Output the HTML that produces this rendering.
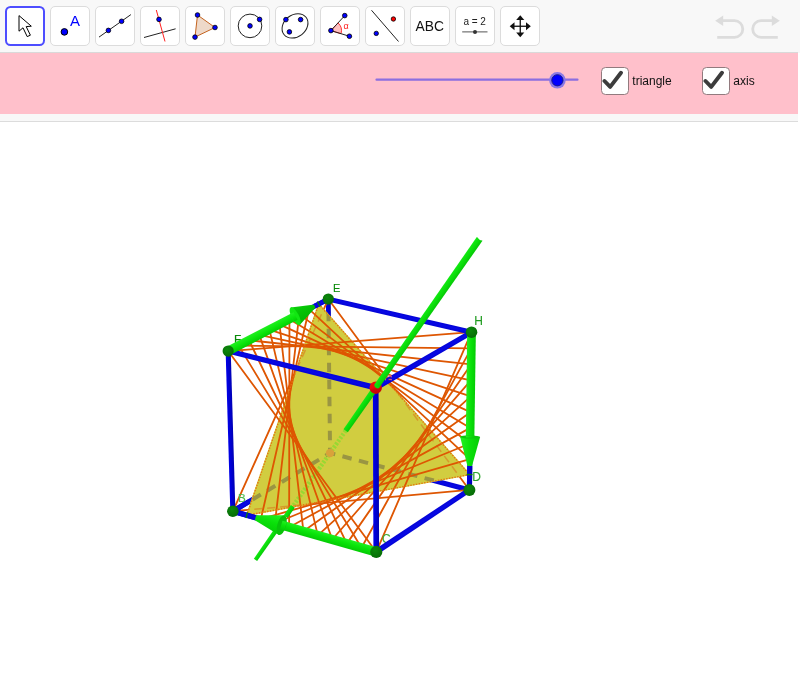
<!DOCTYPE html>
<html><head><meta charset="utf-8"><title>GeoGebra</title>
<style>
html,body{margin:0;padding:0;background:#fff;overflow:hidden}
body{width:800px;height:700px;position:relative;font-family:"Liberation Sans",sans-serif}
#tb{position:absolute;left:0;top:0;width:800px;height:53px;background:#f8f8f8}
#tbl{position:absolute;left:0;top:52px;width:798px;height:1px;background:#d9d9d9}
.btn{position:absolute;top:6px;width:40px;height:40px;box-sizing:border-box;border:1px solid #dcdcdc;border-radius:5px;background:#fff}
.btn svg{position:absolute;left:-1px;top:-1px}
.btn.sel{border:2px solid #4d4dff;border-radius:5.5px}
.btn.sel svg{left:-2px;top:-2px}
#pink{position:absolute;left:0;top:53px;width:798px;height:61px;background:#ffc0cb}
#split{position:absolute;left:0;top:114px;width:798px;height:7px;background:#f8f8f8;border-bottom:1px solid #dcdcdc}
.cb{position:absolute;top:67px;width:27.5px;height:27.5px;box-sizing:border-box;border:1.7px solid #927a7e;border-radius:4.5px;background:#fff}
.cl{position:absolute;top:74px;font-size:12px;line-height:14px;color:#111}
#root{position:absolute;left:0;top:0;width:800px;height:700px;will-change:transform}
</style></head><body>
<div id="root">
<div id="tb">
<div class="btn sel" style="left:5px"><svg width="40" height="40" viewBox="0 0 40 40"><polygon points="19,15.6 19,31.2 23,27.8 27.2,36.6 30.4,35.2 26.2,26.6 31.3,26.2" fill="#fff" stroke="#000" stroke-width="1" stroke-linejoin="miter" transform="translate(-5,-6)"/></svg></div>
<div class="btn" style="left:50px"><svg width="40" height="40" viewBox="0 0 40 40"><g transform="translate(-50,-6)"><circle cx="64.4" cy="31.9" r="3.3" fill="#0000ff" stroke="#000" stroke-width="1"/><text x="70.0" y="25.8" font-size="15" fill="#0000ff" font-family="Liberation Sans, sans-serif">A</text></g></svg></div>
<div class="btn" style="left:95px"><svg width="40" height="40" viewBox="0 0 40 40"><g transform="translate(-95,-6)"><line x1="99" y1="37.1" x2="130.9" y2="14.6" stroke="#222" stroke-width="1"/><circle cx="108.4" cy="30.4" r="2.3" fill="#0000ff" stroke="#000" stroke-width="0.8"/><circle cx="121.6" cy="21.3" r="2.3" fill="#0000ff" stroke="#000" stroke-width="0.8"/></g></svg></div>
<div class="btn" style="left:140px"><svg width="40" height="40" viewBox="0 0 40 40"><g transform="translate(-140,-6)"><line x1="144" y1="37.5" x2="175.6" y2="28.8" stroke="#222" stroke-width="1"/><line x1="156.3" y1="10" x2="165" y2="41.5" stroke="#ff2020" stroke-width="1"/><circle cx="159" cy="19.4" r="2.3" fill="#0000ff" stroke="#000" stroke-width="0.8"/></g></svg></div>
<div class="btn" style="left:185px"><svg width="40" height="40" viewBox="0 0 40 40"><g transform="translate(-185,-6)"><polygon points="197.5,15 215,27.5 195,37.1" fill="#eed9c9" stroke="#c4631f" stroke-width="1"/><circle cx="197.5" cy="15" r="2.3" fill="#0000ff" stroke="#000" stroke-width="0.8"/><circle cx="215" cy="27.5" r="2.3" fill="#0000ff" stroke="#000" stroke-width="0.8"/><circle cx="195" cy="37.1" r="2.3" fill="#0000ff" stroke="#000" stroke-width="0.8"/></g></svg></div>
<div class="btn" style="left:230px"><svg width="40" height="40" viewBox="0 0 40 40"><g transform="translate(-230,-6)"><circle cx="250" cy="25.9" r="11.8" fill="none" stroke="#222" stroke-width="1"/><circle cx="250" cy="25.9" r="2.3" fill="#0000ff" stroke="#000" stroke-width="0.8"/><circle cx="259.6" cy="19.4" r="2.3" fill="#0000ff" stroke="#000" stroke-width="0.8"/></g></svg></div>
<div class="btn" style="left:275px"><svg width="40" height="40" viewBox="0 0 40 40"><g transform="translate(-275,-6)"><ellipse cx="295" cy="25.9" rx="14" ry="11" transform="rotate(-38 295 25.9)" fill="none" stroke="#222" stroke-width="1"/><circle cx="285.9" cy="19.6" r="2.3" fill="#0000ff" stroke="#000" stroke-width="0.8"/><circle cx="300.6" cy="19.6" r="2.3" fill="#0000ff" stroke="#000" stroke-width="0.8"/><circle cx="289.4" cy="31.9" r="2.3" fill="#0000ff" stroke="#000" stroke-width="0.8"/></g></svg></div>
<div class="btn" style="left:320px"><svg width="40" height="40" viewBox="0 0 40 40"><g transform="translate(-320,-6)"><path d="M330.9,30.6 L338.0,22.9 A10.5,10.5 0 0 1 341.0,33.7 Z" fill="#ffc0c0" stroke="#ff3030" stroke-width="1"/><line x1="330.9" y1="30.6" x2="344.75" y2="15.6" stroke="#222" stroke-width="1"/><line x1="330.9" y1="30.6" x2="349.4" y2="36.25" stroke="#222" stroke-width="1"/><circle cx="330.9" cy="30.6" r="2.3" fill="#0000ff" stroke="#000" stroke-width="0.8"/><circle cx="344.75" cy="15.6" r="2.3" fill="#0000ff" stroke="#000" stroke-width="0.8"/><circle cx="349.4" cy="36.25" r="2.3" fill="#0000ff" stroke="#000" stroke-width="0.8"/><text x="343.6" y="29" font-size="9" fill="#ff2020" font-family="Liberation Sans, sans-serif">α</text></g></svg></div>
<div class="btn" style="left:365px"><svg width="40" height="40" viewBox="0 0 40 40"><g transform="translate(-365,-6)"><line x1="371.5" y1="10.25" x2="398.5" y2="41.5" stroke="#222" stroke-width="1"/><circle cx="393.4" cy="19" r="2.2" fill="#ff0000" stroke="#000" stroke-width="0.8"/><circle cx="376.25" cy="33.4" r="2.2" fill="#0000ff" stroke="#000" stroke-width="0.8"/></g></svg></div>
<div class="btn" style="left:410px"><svg width="40" height="40" viewBox="0 0 40 40"><g transform="translate(-410,-6)"><text x="415.6" y="30.7" font-size="13.8" fill="#111" font-family="Liberation Sans, sans-serif">ABC</text></g></svg></div>
<div class="btn" style="left:455px"><svg width="40" height="40" viewBox="0 0 40 40"><g transform="translate(-455,-6)"><text x="463.4" y="24.7" font-size="10" fill="#222" font-family="Liberation Sans, sans-serif">a = 2</text><line x1="462.2" y1="31.9" x2="487.5" y2="31.9" stroke="#555" stroke-width="1"/><circle cx="475" cy="31.9" r="2" fill="#333"/></g></svg></div>
<div class="btn" style="left:500px"><svg width="40" height="40" viewBox="0 0 40 40"><g transform="translate(-500,-6)" fill="#111" stroke="none"><rect x="519.6" y="18" width="1.3" height="16.5"/><rect x="512" y="25.6" width="16.5" height="1.3"/><polygon points="520.25,15.2 524.3,20 516.2,20"/><polygon points="520.25,37.3 524.3,32.5 516.2,32.5"/><polygon points="509.7,26.25 514.5,22.2 514.5,30.3"/><polygon points="530.8,26.25 526,22.2 526,30.3"/></g></svg></div>
<svg style="position:absolute;left:700px;top:0" width="100" height="52" viewBox="700 0 100 52">
<g fill="none" stroke="#dcdcdc" stroke-width="2.8">
<path d="M722.5,20.7 H734.5 A8.2,8.2 0 0 1 734.5,37.3 H717.2"/>
<path d="M772.5,20.7 H761 A8.2,8.2 0 0 0 761,37.3 H777.8"/>
</g>
<polygon points="715.2,20.7 723.2,15.4 723.2,26" fill="#dcdcdc"/>
<polygon points="779.8,20.7 771.8,15.4 771.8,26" fill="#dcdcdc"/>
</svg>
</div>
<div id="tbl"></div>
<div id="pink"></div>
<div id="split"></div>
<svg style="position:absolute;left:360px;top:60px" width="240" height="40" viewBox="360 60 240 40">
<line x1="376.5" y1="79.7" x2="577.5" y2="79.7" stroke="#8c6ee0" stroke-width="2.2" stroke-linecap="round"/>
<circle cx="557.4" cy="80.3" r="8.3" fill="#8a7ae6"/>
<circle cx="557.4" cy="80.3" r="5.6" fill="#0000ff" stroke="#16168c" stroke-width="1"/>
</svg>
<div class="cb" style="left:601.2px"><svg width="24" height="24" viewBox="603.5 69 24 24" style="position:absolute;left:0;top:0"><polyline points="606.0,82.0 611.7,87.9 622.5,73.7" fill="none" stroke="#3c3c3c" stroke-width="3.9" stroke-linecap="round" stroke-linejoin="round"/></svg></div>
<div class="cl" style="left:632.3px">triangle</div>
<div class="cb" style="left:702.2px"><svg width="24" height="24" viewBox="704.5 69 24 24" style="position:absolute;left:0;top:0"><polyline points="707.0,82.0 712.7,87.9 723.5,73.7" fill="none" stroke="#3c3c3c" stroke-width="3.9" stroke-linecap="round" stroke-linejoin="round"/></svg></div>
<div class="cl" style="left:733.3px">axis</div>
<svg width="800" height="578" viewBox="0 122 800 578" style="position:absolute;left:0;top:122px">
<defs>
<style>
.o{stroke:#de5602;stroke-width:1.8;stroke-linecap:round}
.oh{stroke:#d69a2c;stroke-width:1.5;stroke-dasharray:8 5}
.od{stroke:#e67410;stroke-width:1.4;stroke-dasharray:1.5 1.3}
.h{stroke:#9a9542;stroke-width:4.0;stroke-dasharray:9.5 7.5;stroke-dashoffset:4.2}
.axh{stroke:#98d832;stroke-width:4.4;stroke-dasharray:2.2 1.5}
.lbl{font-family:"Liberation Sans",sans-serif}
</style><clipPath id="tc"><polygon points="318.73,304.02 469.61,474.56 246.79,515.23"/></clipPath>
<linearGradient id="g1" gradientUnits="userSpaceOnUse" x1="331.56" y1="376.01" x2="326.81" y2="376.06"><stop offset="0" stop-color="#0000b4"/><stop offset="0.45" stop-color="#0000d2"/><stop offset="1" stop-color="#0000ea"/></linearGradient>
<linearGradient id="g2" gradientUnits="userSpaceOnUse" x1="280.21" y1="480.05" x2="282.72" y2="484.25"><stop offset="0" stop-color="#0202d4"/><stop offset="0.45" stop-color="#0808e6"/><stop offset="1" stop-color="#0404d6"/></linearGradient>
<linearGradient id="g3" gradientUnits="userSpaceOnUse" x1="399.11" y1="473.85" x2="400.37" y2="469.12"><stop offset="0" stop-color="#0202d4"/><stop offset="0.45" stop-color="#0808e6"/><stop offset="1" stop-color="#0404d6"/></linearGradient>
<linearGradient id="g4" gradientUnits="userSpaceOnUse" x1="242.18" y1="508.64" x2="239.57" y2="504.30"><stop offset="0" stop-color="#0202d4"/><stop offset="0.45" stop-color="#0808e6"/><stop offset="1" stop-color="#0404d6"/></linearGradient>
<linearGradient id="g5" gradientUnits="userSpaceOnUse" x1="268.18" y1="545.37" x2="264.69" y2="542.93"><stop offset="0" stop-color="#06c806"/><stop offset="0.45" stop-color="#0adc0a"/><stop offset="1" stop-color="#12ea12"/></linearGradient>
<linearGradient id="g6" gradientUnits="userSpaceOnUse" x1="291.23" y1="512.80" x2="287.33" y2="510.08"><stop offset="0" stop-color="#06c806"/><stop offset="0.45" stop-color="#0adc0a"/><stop offset="1" stop-color="#12ea12"/></linearGradient>
<linearGradient id="g7" gradientUnits="userSpaceOnUse" x1="400.47" y1="313.21" x2="399.35" y2="318.03"><stop offset="0" stop-color="#0202d4"/><stop offset="0.45" stop-color="#0808e6"/><stop offset="1" stop-color="#0404d6"/></linearGradient>
<linearGradient id="g8" gradientUnits="userSpaceOnUse" x1="277.10" y1="322.86" x2="279.38" y2="327.25"><stop offset="0" stop-color="#0202d4"/><stop offset="0.45" stop-color="#0808e6"/><stop offset="1" stop-color="#0404d6"/></linearGradient>
<linearGradient id="g9" gradientUnits="userSpaceOnUse" x1="227.97" y1="431.24" x2="233.06" y2="431.09"><stop offset="0" stop-color="#0000ea"/><stop offset="0.45" stop-color="#0000d2"/><stop offset="1" stop-color="#0000b4"/></linearGradient>
<linearGradient id="g10" gradientUnits="userSpaceOnUse" x1="473.01" y1="411.11" x2="467.91" y2="411.04"><stop offset="0" stop-color="#0000b4"/><stop offset="0.45" stop-color="#0000d2"/><stop offset="1" stop-color="#0000ea"/></linearGradient>
<linearGradient id="g11" gradientUnits="userSpaceOnUse" x1="303.82" y1="534.22" x2="305.29" y2="529.02"><stop offset="0" stop-color="#0202d4"/><stop offset="0.45" stop-color="#0808e6"/><stop offset="1" stop-color="#0404d6"/></linearGradient>
<linearGradient id="g12" gradientUnits="userSpaceOnUse" x1="424.33" y1="523.20" x2="421.33" y2="518.71"><stop offset="0" stop-color="#0202d4"/><stop offset="0.45" stop-color="#0808e6"/><stop offset="1" stop-color="#0404d6"/></linearGradient>
<linearGradient id="g13" gradientUnits="userSpaceOnUse" x1="301.29" y1="371.99" x2="302.59" y2="366.75"><stop offset="0" stop-color="#0202d4"/><stop offset="0.45" stop-color="#0808e6"/><stop offset="1" stop-color="#0404d6"/></linearGradient>
<linearGradient id="g14" gradientUnits="userSpaceOnUse" x1="424.97" y1="362.28" x2="422.26" y2="357.60"><stop offset="0" stop-color="#0202d4"/><stop offset="0.45" stop-color="#0808e6"/><stop offset="1" stop-color="#0404d6"/></linearGradient>
<linearGradient id="g15" gradientUnits="userSpaceOnUse" x1="373.13" y1="469.84" x2="378.83" y2="469.82"><stop offset="0" stop-color="#0000ea"/><stop offset="0.45" stop-color="#0000d2"/><stop offset="1" stop-color="#0000b4"/></linearGradient>
<clipPath id="gc"><rect x="385.3" y="374.5" width="6.2" height="5.8"/></clipPath>
<linearGradient id="g16" gradientUnits="userSpaceOnUse" x1="264.14" y1="337.31" x2="260.10" y2="329.54"><stop offset="0" stop-color="#04cc04"/><stop offset="0.45" stop-color="#0ae40a"/><stop offset="1" stop-color="#20f020"/></linearGradient>
<linearGradient id="g17" gradientUnits="userSpaceOnUse" x1="299.70" y1="324.95" x2="290.66" y2="307.56"><stop offset="0" stop-color="#02b402"/><stop offset="0.5" stop-color="#04c004"/><stop offset="1" stop-color="#0ad00a"/></linearGradient>
<linearGradient id="g18" gradientUnits="userSpaceOnUse" x1="295.91" y1="320.72" x2="291.94" y2="313.09"><stop offset="0" stop-color="#04cc04"/><stop offset="0.45" stop-color="#0ae40a"/><stop offset="1" stop-color="#20f020"/></linearGradient>
<linearGradient id="g19" gradientUnits="userSpaceOnUse" x1="466.51" y1="385.03" x2="475.11" y2="385.15"><stop offset="0" stop-color="#20f020"/><stop offset="0.45" stop-color="#0ae40a"/><stop offset="1" stop-color="#04cc04"/></linearGradient>
<linearGradient id="g20" gradientUnits="userSpaceOnUse" x1="460.12" y1="436.85" x2="480.12" y2="437.12"><stop offset="0" stop-color="#22f222"/><stop offset="0.5" stop-color="#0ae00a"/><stop offset="1" stop-color="#04cc04"/></linearGradient>
<linearGradient id="g21" gradientUnits="userSpaceOnUse" x1="465.87" y1="436.46" x2="474.37" y2="436.57"><stop offset="0" stop-color="#20f020"/><stop offset="0.45" stop-color="#0ae40a"/><stop offset="1" stop-color="#04cc04"/></linearGradient>
<linearGradient id="g22" gradientUnits="userSpaceOnUse" x1="329.77" y1="534.02" x2="327.27" y2="542.82"><stop offset="0" stop-color="#20f020"/><stop offset="0.45" stop-color="#0ae40a"/><stop offset="1" stop-color="#04cc04"/></linearGradient>
<linearGradient id="g23" gradientUnits="userSpaceOnUse" x1="284.52" y1="515.33" x2="278.95" y2="534.96"><stop offset="0" stop-color="#22f222"/><stop offset="0.5" stop-color="#0ae00a"/><stop offset="1" stop-color="#04cc04"/></linearGradient>
<linearGradient id="g24" gradientUnits="userSpaceOnUse" x1="284.63" y1="521.29" x2="282.17" y2="529.95"><stop offset="0" stop-color="#20f020"/><stop offset="0.45" stop-color="#0ae40a"/><stop offset="1" stop-color="#04cc04"/></linearGradient>
<linearGradient id="g25" gradientUnits="userSpaceOnUse" x1="322.60" y1="304.72" x2="320.38" y2="300.44"><stop offset="0" stop-color="#0202d4"/><stop offset="0.45" stop-color="#0808e6"/><stop offset="1" stop-color="#0404d6"/></linearGradient>
<linearGradient id="g26" gradientUnits="userSpaceOnUse" x1="467.02" y1="477.90" x2="472.12" y2="477.96"><stop offset="0" stop-color="#0000ea"/><stop offset="0.45" stop-color="#0000d2"/><stop offset="1" stop-color="#0000b4"/></linearGradient>
<linearGradient id="g27" gradientUnits="userSpaceOnUse" x1="244.87" y1="512.01" x2="243.46" y2="516.96"><stop offset="0" stop-color="#0202d4"/><stop offset="0.45" stop-color="#0808e6"/><stop offset="1" stop-color="#0404d6"/></linearGradient>
<linearGradient id="rsph" x1="0" y1="0" x2="0.3" y2="1"><stop offset="0" stop-color="#ee1010"/><stop offset="0.55" stop-color="#e80c0c"/><stop offset="0.7" stop-color="#cc0808"/><stop offset="1" stop-color="#c80606"/></linearGradient>
<radialGradient id="sph" cx="0.4" cy="0.35" r="0.75"><stop offset="0" stop-color="#0c880c"/><stop offset="1" stop-color="#066806"/></radialGradient>
<linearGradient id="g28" gradientUnits="userSpaceOnUse" x1="362.98" y1="410.80" x2="358.39" y2="407.59"><stop offset="0" stop-color="#06c806"/><stop offset="0.45" stop-color="#0adc0a"/><stop offset="1" stop-color="#12ea12"/></linearGradient>
<linearGradient id="g29" gradientUnits="userSpaceOnUse" x1="430.92" y1="314.22" x2="425.67" y2="310.55"><stop offset="0" stop-color="#06c806"/><stop offset="0.45" stop-color="#0adc0a"/><stop offset="1" stop-color="#12ea12"/></linearGradient>
</defs>
<polygon points="332.43,453.00 330.70,299.02 325.90,299.07 327.73,453.05" fill="url(#g1)"/>
<polygon points="328.87,451.01 231.54,509.09 234.16,513.46 331.28,455.04" fill="url(#g2)"/>
<polygon points="329.47,455.29 468.75,492.41 470.06,487.48 330.68,450.75" fill="url(#g3)"/>
<line x1="328.30" y1="299.05" x2="469.40" y2="489.95" class="o" />
<line x1="469.40" y1="489.95" x2="232.85" y2="511.27" class="o" />
<line x1="232.85" y1="511.27" x2="328.30" y2="299.05" class="o" />
<polygon points="318.73,304.02 469.61,474.56 246.79,515.23" fill="#d1cd40" stroke="#d1cd40" stroke-width="1.5" stroke-linejoin="round"/>
<g clip-path="url(#tc)">
<line x1="330.08" y1="453.02" x2="328.30" y2="299.05" class="h" />
<line x1="330.08" y1="453.02" x2="232.85" y2="511.27" class="h" />
<line x1="330.08" y1="453.02" x2="469.40" y2="489.95" class="h" />
<line x1="345.66" y1="430.71" x2="255.47" y2="559.85" class="axh" />
<line x1="328.30" y1="299.05" x2="469.40" y2="489.95" class="oh" />
<line x1="469.40" y1="489.95" x2="232.85" y2="511.27" class="oh" />
<line x1="232.85" y1="511.27" x2="328.30" y2="299.05" class="oh" />
<circle cx="330.08" cy="453.02" r="4.2" fill="#d9a23a"/>
</g>
<line x1="228.18" y1="351.06" x2="471.52" y2="332.19" class="o" />
<line x1="471.52" y1="332.19" x2="376.26" y2="551.97" class="o" />
<line x1="376.26" y1="551.97" x2="228.18" y2="351.06" class="o" />
<line x1="238.65" y1="345.62" x2="471.31" y2="348.37" class="o" />
<line x1="471.31" y1="348.37" x2="361.50" y2="547.78" class="o" />
<line x1="361.50" y1="547.78" x2="238.65" y2="345.62" class="o" />
<line x1="249.02" y1="340.24" x2="471.09" y2="364.46" class="o" />
<line x1="471.09" y1="364.46" x2="346.85" y2="543.62" class="o" />
<line x1="346.85" y1="543.62" x2="249.02" y2="340.24" class="o" />
<line x1="259.28" y1="334.90" x2="470.88" y2="380.45" class="o" />
<line x1="470.88" y1="380.45" x2="332.28" y2="539.49" class="o" />
<line x1="332.28" y1="539.49" x2="259.28" y2="334.90" class="o" />
<line x1="269.44" y1="329.63" x2="470.66" y2="396.36" class="o" />
<line x1="470.66" y1="396.36" x2="317.81" y2="535.38" class="o" />
<line x1="317.81" y1="535.38" x2="269.44" y2="329.63" class="o" />
<line x1="279.49" y1="324.40" x2="470.45" y2="412.17" class="o" />
<line x1="470.45" y1="412.17" x2="303.43" y2="531.30" class="o" />
<line x1="303.43" y1="531.30" x2="279.49" y2="324.40" class="o" />
<line x1="289.45" y1="319.23" x2="470.24" y2="427.90" class="o" />
<line x1="470.24" y1="427.90" x2="289.13" y2="527.24" class="o" />
<line x1="289.13" y1="527.24" x2="289.45" y2="319.23" class="o" />
<line x1="299.31" y1="314.11" x2="470.03" y2="443.54" class="o" />
<line x1="470.03" y1="443.54" x2="274.93" y2="523.21" class="o" />
<line x1="274.93" y1="523.21" x2="299.31" y2="314.11" class="o" />
<line x1="309.07" y1="309.04" x2="469.82" y2="459.10" class="o" />
<line x1="469.82" y1="459.10" x2="260.82" y2="519.21" class="o" />
<line x1="260.82" y1="519.21" x2="309.07" y2="309.04" class="o" />
<line x1="318.73" y1="304.02" x2="469.61" y2="474.56" class="od" />
<line x1="469.61" y1="474.56" x2="246.79" y2="515.23" class="od" />
<line x1="246.79" y1="515.23" x2="318.73" y2="304.02" class="od" />
<text x="332.9" y="291.9" class="lbl" font-size="11.0" fill="#0a8a0a" stroke="#0a8a0a" stroke-width="0.12">E</text>
<text x="474.3" y="324.9" class="lbl" font-size="12.0" fill="#229c22" stroke="#229c22" stroke-width="0.12">H</text>
<text x="472.3" y="480.9" class="lbl" font-size="12.0" fill="#2da22d" stroke="#2da22d" stroke-width="0.12">D</text>
<text x="382.0" y="542.8" class="lbl" font-size="12.0" fill="#3aac3a" stroke="#3aac3a" stroke-width="0.12">C</text>
<text x="238.0" y="501.6" class="lbl" font-size="11.6" fill="#4cba4c" stroke="#4cba4c" stroke-width="0.12">B</text>
<text x="234.0" y="343.7" class="lbl" font-size="12.0" fill="#0a8a0a" stroke="#0a8a0a" stroke-width="0.12">F</text>
<polygon points="234.16,513.46 250.19,503.81 247.61,499.51 231.54,509.09" fill="url(#g4)"/>
<polygon points="257.11,560.99 279.24,529.74 275.55,527.16 253.83,558.70" fill="url(#g5)"/>
<polygon points="287.63,517.91 294.83,507.69 290.89,504.94 283.77,515.22" fill="url(#g6)"/>
<polygon points="472.10,329.71 328.84,296.71 327.76,301.38 470.95,334.68" fill="url(#g7)"/>
<polygon points="327.19,296.92 227.00,348.80 229.35,353.32 329.41,301.18" fill="url(#g8)"/>
<polygon points="225.63,351.14 230.31,511.35 235.40,511.20 230.73,350.99" fill="url(#g9)"/>
<polygon points="471.95,489.98 474.07,332.23 468.97,332.16 466.86,489.91" fill="url(#g10)"/>
<polygon points="232.16,513.73 375.48,554.71 377.03,549.23 233.55,508.82" fill="url(#g11)"/>
<polygon points="377.84,554.34 470.82,492.07 467.99,487.82 374.68,549.59" fill="url(#g12)"/>
<polygon points="227.56,353.54 375.02,390.45 376.39,384.92 228.79,348.59" fill="url(#g13)"/>
<polygon points="377.14,390.15 472.80,334.40 470.25,329.99 374.28,385.22" fill="url(#g14)"/>
<polygon points="372.86,387.70 373.41,551.98 379.11,551.96 378.56,387.68" fill="url(#g15)"/>
<text x="384.0" y="384.3" font-size="12" font-family="Liberation Sans, sans-serif" fill="#ffe0e0" stroke="#e83030" stroke-width="0.7" clip-path="url(#gc)">G</text>
<polygon points="230.23,355.01 298.05,319.61 294.08,311.98 226.13,347.11" fill="url(#g16)"/>
<polygon points="299.70,324.95 318.73,304.02 290.66,307.56" fill="url(#g17)"/>
<ellipse cx="295.18" cy="316.25" rx="3.70" ry="9.80" transform="rotate(-27.45 295.18 316.25)" fill="#12e612"/>
<polygon points="294.21,321.60 297.61,319.84 293.64,312.21 290.24,313.97" fill="url(#g18)"/>
<polygon points="467.17,332.14 465.85,437.93 474.35,438.04 475.87,332.25" fill="url(#g19)"/>
<polygon points="460.12,436.85 469.61,474.56 480.12,437.12" fill="url(#g20)"/>
<ellipse cx="470.12" cy="436.98" rx="1.60" ry="10.00" transform="rotate(90.77 470.12 436.98)" fill="#0cc60c"/>
<polygon points="465.89,435.49 465.86,437.43 474.36,437.54 474.39,435.60" fill="url(#g21)"/>
<polygon points="377.53,547.49 282.00,520.54 279.55,529.20 374.99,556.44" fill="url(#g22)"/>
<polygon points="284.52,515.33 246.79,515.23 278.95,534.96" fill="url(#g23)"/>
<ellipse cx="281.74" cy="525.14" rx="4.40" ry="10.20" transform="rotate(-164.16 281.74 525.14)" fill="#0ac20a"/>
<polygon points="286.78,521.90 282.49,520.68 280.03,529.34 284.32,530.56" fill="url(#g24)"/>
<polygon points="315.80,308.27 329.41,301.18 327.19,296.92 313.57,303.97" fill="url(#g25)"/>
<polygon points="467.18,465.88 466.86,489.91 471.95,489.98 472.28,465.95" fill="url(#g26)"/>
<polygon points="256.19,515.19 233.55,508.82 232.16,513.73 254.77,520.19" fill="url(#g27)"/>
<line x1="320.07" y1="306.59" x2="317.39" y2="301.44" stroke="#0a7c0a" stroke-width="1.3"/>
<line x1="466.71" y1="474.52" x2="472.51" y2="474.60" stroke="#0a7c0a" stroke-width="1.3"/>
<line x1="247.58" y1="512.44" x2="246.00" y2="518.02" stroke="#0a7c0a" stroke-width="1.3"/>
<circle cx="232.85" cy="511.27" r="5.8" fill="url(#sph)"/>
<circle cx="376.26" cy="551.97" r="6.1" fill="url(#sph)"/>
<circle cx="469.40" cy="489.95" r="6.0" fill="url(#sph)"/>
<circle cx="328.30" cy="299.05" r="5.6" fill="url(#sph)"/>
<circle cx="228.18" cy="351.06" r="5.6" fill="url(#sph)"/>
<circle cx="471.52" cy="332.19" r="5.8" fill="url(#sph)"/>
<polygon points="347.84,432.22 378.13,389.38 373.29,386.00 343.49,429.19" fill="url(#g28)"/>
<circle cx="375.71" cy="387.69" r="6.25" fill="url(#rsph)"/>
<ellipse cx="376.97" cy="385.88" rx="2.2" ry="2.95" transform="rotate(-55.07 376.97 385.88)" fill="#0ade0a"/>
<polygon points="379.39,387.57 482.46,240.86 476.80,236.91 374.55,384.19" fill="url(#g29)"/>
<ellipse cx="480.15" cy="238.15" rx="1.5" ry="2.7" transform="rotate(-55.07 480.15 238.15)" fill="#fff"/>
</svg>
</div>
</body></html>
